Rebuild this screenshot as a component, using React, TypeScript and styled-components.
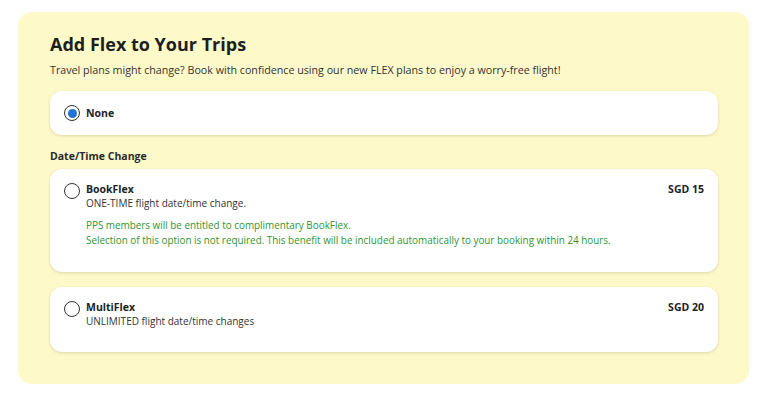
import styled, { createGlobalStyle } from 'styled-components';

const GlobalStyle = createGlobalStyle`
  body {
    margin: 0;
    background: #ffffff;
    font-family: "Open Sans", "Liberation Sans", sans-serif;
    color: #222222;
  }
`

const Page = styled.div`
  padding: 12px 19px 22px 18px;
`

const Panel = styled.section`
  background: #fef9c9;
  border-radius: 14px;
  padding: 20px 31px 32px 32px;
  display: flex;
  flex-direction: column;
`

const Title = styled.h2`
  margin: 0;
  font-size: 18px;
  font-weight: 700;
  color: #1e1e1e;
  line-height: 24px;
`

const Intro = styled.p`
  margin: 7px 0 14px;
  font-size: 10.7px;
  color: #333333;
  line-height: 14px;
`

const SectionLabel = styled.div`
  font-size: 10.5px;
  font-weight: 700;
  color: #2a2a2a;
  margin: 14px 0 6px;
  line-height: 14px;
`

const Card = styled.div<{ $compact?: boolean }>`
  background: #ffffff;
  border-radius: 12px;
  box-shadow: 0 1px 3px rgba(120, 110, 60, 0.25);
  padding: ${(p) => (p.$compact ? '14px' : '13px 14px 24px')};
  display: flex;
  align-items: ${(p) => (p.$compact ? 'center' : 'flex-start')};
  gap: 6px;
  & + & {
    margin-top: 15px;
  }
`

const Radio = styled.span<{ $checked?: boolean }>`
  width: 16px;
  height: 16px;
  margin-top: ${(p) => (p.$checked ? '0' : '1px')};
  border: 1.5px solid #333333;
  border-radius: 50%;
  box-sizing: border-box;
  flex-shrink: 0;
  display: flex;
  align-items: center;
  justify-content: center;
  &::after {
    content: '';
    width: 9px;
    height: 9px;
    border-radius: 50%;
    background: ${(p) => (p.$checked ? '#1f74d6' : 'transparent')};
  }
`

const Body = styled.div`
  flex: 1;
  display: flex;
  flex-direction: column;
`

const HeadRow = styled.div`
  display: flex;
  justify-content: space-between;
  align-items: baseline;
`

const Name = styled.span`
  font-size: 10.5px;
  font-weight: 700;
  color: #222222;
  line-height: 14px;
`

const Price = styled.span`
  font-size: 10.5px;
  font-weight: 700;
  color: #222222;
`

const Desc = styled.span`
  font-size: 10px;
  color: #333333;
  line-height: 14px;
`

const Note = styled.div`
  margin-top: 8px;
  font-size: 9.9px;
  color: #2f9532;
  line-height: 15px;
`

function App(): JSX.Element {
  return (
    <>
      <GlobalStyle />
      <Page>
        <Panel>
          <Title>Add Flex to Your Trips</Title>
          <Intro>Travel plans might change? Book with confidence using our new FLEX plans to enjoy a worry-free flight!</Intro>
          <Card $compact>
            <Radio $checked />
            <Name>None</Name>
          </Card>
          <SectionLabel>Date/Time Change</SectionLabel>
          <Card>
            <Radio />
            <Body>
              <HeadRow>
                <Name>BookFlex</Name>
                <Price>SGD 15</Price>
              </HeadRow>
              <Desc>ONE-TIME flight date/time change.</Desc>
              <Note>
                PPS members will be entitled to complimentary BookFlex.
                <br />
                Selection of this option is not required. This benefit will be included automatically to your booking within 24 hours.
              </Note>
            </Body>
          </Card>
          <Card>
            <Radio />
            <Body>
              <HeadRow>
                <Name>MultiFlex</Name>
                <Price>SGD 20</Price>
              </HeadRow>
              <Desc>UNLIMITED flight date/time changes</Desc>
            </Body>
          </Card>
        </Panel>
      </Page>
    </>
  )
}

export default App;
